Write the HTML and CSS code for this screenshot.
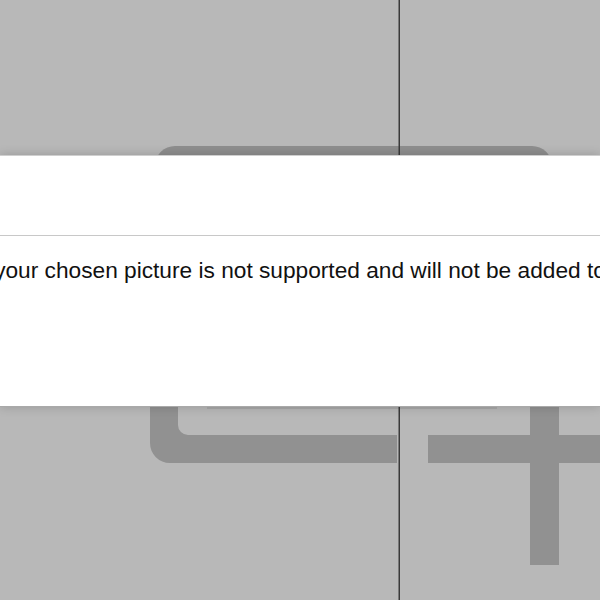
FILE: index.html
```html
<!DOCTYPE html>
<html>
<head>
<meta charset="utf-8">
<link rel="stylesheet" href="styles.css">
</head>
<body>
<div class="stage">
  <svg class="art" width="600" height="600" viewBox="0 0 600 600" aria-hidden="true">
    <rect x="155" y="146" width="397" height="70" rx="20" fill="#8e8e8e"/>
    <path d="M150 395 V443 A20 20 0 0 0 170 463 H397 V435 H188 A10 10 0 0 1 178 425 V395 Z" fill="#919191"/>
    <rect x="207" y="407" width="290" height="2" fill="#a8a8a8"/>
    <rect x="428" y="435" width="172" height="28" fill="#919191"/>
    <rect x="530" y="395" width="29" height="170" fill="#919191"/>
    <rect x="398.5" y="0" width="1.5" height="600" fill="#3a3a3a"/>
  </svg>
  <div class="dialog">
    <div class="dialog-head"></div>
    <div class="dialog-body">
      <p class="dialog-msg">your chosen picture is not supported and will not be added to</p>
    </div>
  </div>
</div>
</body>
</html>
```

FILE: styles.css
```css
html, body {
  margin: 0;
  padding: 0;
}
body {
  background: #b8b8b8;
  font-family: "Liberation Sans", Arial, sans-serif;
}
.stage {
  position: relative;
  width: 600px;
  height: 600px;
  overflow: hidden;
  background: #b8b8b8;
}
.art {
  display: block;
}
.dialog {
  position: absolute;
  left: 0;
  right: 0;
  top: 155px;
  height: 250px;
  background: #ffffff;
  border-top: 1px solid #cfcfcf;
  border-bottom: 1px solid #a9a9a9;
  box-shadow: 0 0 10px rgba(0, 0, 0, 0.18);
  display: flex;
  flex-direction: column;
}
.dialog-head {
  height: 79px;
  border-bottom: 1px solid #c8c8c8;
  flex: none;
}
.dialog-body {
  display: flex;
  justify-content: center;
  padding-top: 21px;
}
.dialog-msg {
  margin: 0;
  flex: none;
  white-space: nowrap;
  font-size: 22.7px;
  line-height: 26px;
  color: #111111;
}
```
